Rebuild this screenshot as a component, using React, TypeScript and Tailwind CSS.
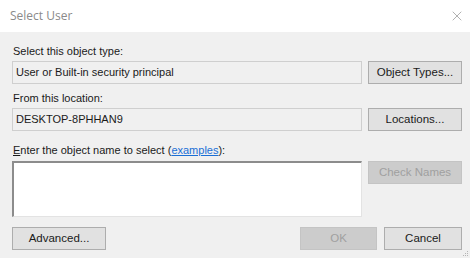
import { X } from "lucide-react";

const btn =
  "h-[23px] border border-[#adadad] bg-[#e1e1e1] text-[11.5px] text-[#1a1a1a] flex items-center justify-center";
const btnOff =
  "h-[23px] border border-[#c4c4c4] bg-[#cccccc] text-[11.5px] text-[#a0a0a0] flex items-center justify-center";

const App = () => {
  return (
    <div className="w-[474px] h-[260px] bg-white font-['Liberation_Sans',Arial,sans-serif] overflow-hidden">
      {/* title bar */}
      <div className="h-[32px] flex items-center justify-between pl-[10px] pr-[9px]">
        <span className="font-['Open_Sans',sans-serif] text-[12px] text-[#8a8a8a]">Select User</span>
        <X size={16} strokeWidth={1} className="text-[#8a8a8a]" />
      </div>

      <div className="relative h-[226px] mr-[4px] bg-[#f0f0f0] pl-[12px] pr-[8px] pt-[12px] text-[11px] text-[#1a1a1a]">
        {/* object type */}
        <div className="flex gap-[6px]">
          <div className="w-[350px]">
            <div className="h-[14px] leading-[14px] pl-[1px]">Select this object type:</div>
            <div className="mt-[3px] h-[23px] border border-[#cfcfcf] bg-[#f0f0f0] flex items-center pl-[3px]">
              User or Built-in security principal
            </div>
          </div>
          <div className="pt-[17px]">
            <div className={`${btn} w-[94px]`}>Object Types...</div>
          </div>
        </div>

        {/* location */}
        <div className="flex gap-[6px] mt-[7px]">
          <div className="w-[350px]">
            <div className="h-[14px] leading-[14px] pl-[1px]">From this location:</div>
            <div className="mt-[3px] h-[23px] border border-[#cfcfcf] bg-[#f0f0f0] flex items-center pl-[3px]">
              DESKTOP-8PHHAN9
            </div>
          </div>
          <div className="pt-[17px]">
            <div className={`${btn} w-[94px]`}>Locations...</div>
          </div>
        </div>

        {/* object name */}
        <div className="flex gap-[6px] mt-[12px]">
          <div className="w-[350px]">
            <div className="h-[14px] leading-[14px] pl-[1px]">
              <span className="underline">E</span>nter the object name to select (
              <span className="text-[#1a6fd6] underline">examples</span>):
            </div>
            <div className="mt-[4px] h-[56px] bg-white border-t-2 border-l-2 border-t-[#8c8c8c] border-l-[#8c8c8c] border-r border-b border-r-[#e3e3e3] border-b-[#e3e3e3]" />
          </div>
          <div className="pt-[18px]">
            <div className={`${btnOff} w-[94px]`}>Check Names</div>
          </div>
        </div>

        {/* bottom buttons */}
        <div className="flex items-center mt-[10px]">
          <div className={`${btn} w-[94px]`}>Advanced...</div>
          <div className="ml-auto flex gap-[7px]">
            <div className={`${btnOff} w-[77px]`}>OK</div>
            <div className={`${btn} w-[78px]`}>Cancel</div>
          </div>
        </div>

        {/* resize grip */}
        <svg className="absolute right-[1px] bottom-[1px]" width="6" height="6" viewBox="0 0 6 6">
          <rect x="4" y="0" width="1" height="1" fill="#b5b5b5" />
          <rect x="2" y="2" width="1" height="1" fill="#b5b5b5" />
          <rect x="4" y="2" width="1" height="1" fill="#b5b5b5" />
          <rect x="0" y="4" width="1" height="1" fill="#b5b5b5" />
          <rect x="2" y="4" width="1" height="1" fill="#b5b5b5" />
          <rect x="4" y="4" width="1" height="1" fill="#b5b5b5" />
        </svg>
      </div>
    </div>
  );
};

export default App;
